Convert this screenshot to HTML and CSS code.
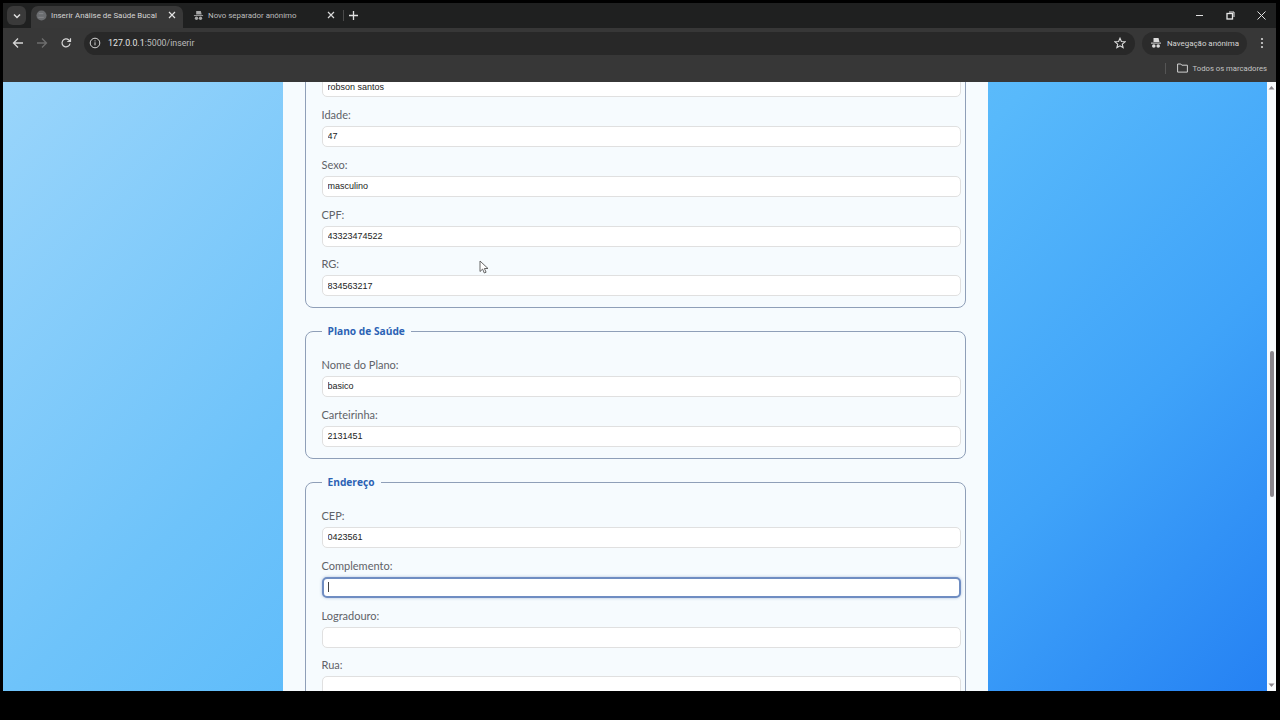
FILE: index.html
```html
<!DOCTYPE html>
<html>
    <head>
        <title>Inserir Análise de Saúde Bucal</title>

        <link rel="stylesheet" href="styles.css">

    </head>

    <body>
    <div class="browser">
        <div class="tabstrip">
            <span class="tab-search">
                <svg width="10" height="10" viewBox="0 0 10 10"><path d="M2 3.5 5 6.5 8 3.5" fill="none" stroke="#e0e0e0" stroke-width="1.5"/></svg>
            </span>
            <div class="tab tab-active">
                <svg class="favicon" width="11" height="11" viewBox="0 0 12 12"><circle cx="6" cy="6" r="5.5" fill="#6b6d70"/><path d="M3 4h5M2.5 8h6" stroke="#88898c" stroke-width="1"/></svg>
                <span class="tab-title">Inserir Análise de Saúde Bucal</span>
                <svg class="tab-x" width="8" height="8" viewBox="0 0 8 8"><path d="M1 1 7 7M7 1 1 7" stroke="#e4e4e4" stroke-width="1.2"/></svg>
            </div>
            <div class="tab tab-other">
                <svg class="favicon" width="11" height="11" viewBox="0 0 12 12"><path d="M3.5 1h5l1 4h-6z" fill="#a8a8a8"/><path d="M1 5.6h10v1H1z" fill="#a8a8a8"/><circle cx="3.8" cy="9" r="1.8" fill="#a8a8a8"/><circle cx="8.2" cy="9" r="1.8" fill="#a8a8a8"/></svg>
                <span class="tab-title">Novo separador anónimo</span>
                <svg class="tab-x" width="8" height="8" viewBox="0 0 8 8"><path d="M1 1 7 7M7 1 1 7" stroke="#d8d8d8" stroke-width="1.2"/></svg>
            </div>
            <span class="tab-sep"></span>
            <svg class="tab-new" width="9" height="9" viewBox="0 0 9 9"><path d="M4.5 0v9M0 4.5h9" stroke="#e0e0e0" stroke-width="1.3"/></svg>
            <div class="win-controls">
                <svg width="9" height="9" viewBox="0 0 9 9"><path d="M1 4.5h7" stroke="#e0e0e0" stroke-width="1"/></svg>
                <svg width="9" height="9" viewBox="0 0 9 9"><rect x="1" y="2.5" width="5.5" height="5.5" fill="none" stroke="#e8e8e8" stroke-width="1.3"/><path d="M3 1h5v5" fill="none" stroke="#e8e8e8" stroke-width="1"/></svg>
                <svg width="9" height="9" viewBox="0 0 9 9"><path d="M.5.5l8 8M8.5.5l-8 8" stroke="#e0e0e0" stroke-width="1"/></svg>
            </div>
        </div>

        <div class="toolbar">
            <svg class="nav-btn" width="12" height="12" viewBox="0 0 12 12"><path d="M11 6H2M6 1.5 1.5 6 6 10.5" fill="none" stroke="#d6d6d6" stroke-width="1.3"/></svg>
            <svg class="nav-btn" width="12" height="12" viewBox="0 0 12 12"><path d="M1 6h9M6 1.5 10.5 6 6 10.5" fill="none" stroke="#6e6e6e" stroke-width="1.3"/></svg>
            <svg class="nav-btn" width="12" height="12" viewBox="0 0 12 12"><path d="M10 6.5A4 4 0 1 1 8.8 3L10.2 4.3M10.5 1.3v3.2H7.3" fill="none" stroke="#d6d6d6" stroke-width="1.2"/></svg>
            <div class="omnibox">
                <svg width="12" height="12" viewBox="0 0 12 12"><circle cx="6" cy="6" r="4.8" fill="none" stroke="#d6d6d6" stroke-width="1"/><path d="M6 5.3v3M6 3.4v1" stroke="#d6d6d6" stroke-width="1"/></svg>
                <span class="url">127.0.0.1<span class="url-path">:5000/inserir</span></span>
                <svg class="star" width="12" height="12" viewBox="0 0 12 12"><path d="M6 1.2 7.4 4.5 11 4.8 8.3 7.1 9.1 10.6 6 8.8 2.9 10.6 3.7 7.1 1 4.8 4.6 4.5z" fill="none" stroke="#dcdcdc" stroke-width="1.1"/></svg>
            </div>
            <div class="incognito">
                <svg width="12" height="12" viewBox="0 0 12 12"><path d="M3.5 1h5l1 4h-6z" fill="#dcdcdc"/><path d="M1 5.6h10v1H1z" fill="#dcdcdc"/><circle cx="3.8" cy="9" r="1.8" fill="#dcdcdc"/><circle cx="8.2" cy="9" r="1.8" fill="#dcdcdc"/></svg>
                <span>Navegação anónima</span>
            </div>
            <svg class="kebab" width="4" height="12" viewBox="0 0 4 12"><circle cx="2" cy="2" r="1.1" fill="#d6d6d6"/><circle cx="2" cy="6" r="1.1" fill="#d6d6d6"/><circle cx="2" cy="10" r="1.1" fill="#d6d6d6"/></svg>
        </div>

        <div class="bookmarks">
            <span class="bm-sep"></span>
            <svg width="11" height="10" viewBox="0 0 11 10"><path d="M.6 1h3.2l1 1.2h5.6v6.9H.6z" fill="none" stroke="#d0d0d0" stroke-width="1"/></svg>
            <span>Todos os marcadores</span>
        </div>

        <div class="viewport">
            <div class="page">
                <div class="container">
                    <fieldset>
                        <div class="field"><input type="text" value="robson santos"></div>
                        <div class="field"><label>Idade:</label><input type="text" value="47"></div>
                        <div class="field"><label>Sexo:</label><input type="text" value="masculino"></div>
                        <div class="field"><label>CPF:</label><input type="text" value="43323474522"></div>
                        <div class="field"><label>RG:</label><input type="text" value="834563217"></div>
                    </fieldset>

                    <fieldset>
                        <legend>Plano de Saúde</legend>
                        <div class="field"><label>Nome do Plano:</label><input type="text" value="basico"></div>
                        <div class="field"><label>Carteirinha:</label><input type="text" value="2131451"></div>
                    </fieldset>

                    <fieldset>
                        <legend>Endereço</legend>
                        <div class="field"><label>CEP:</label><input type="text" value="0423561"></div>
                        <div class="field field-focus"><label>Complemento:</label><input type="text"><span class="caret"></span></div>
                        <div class="field"><label>Logradouro:</label><input type="text"></div>
                        <div class="field"><label>Rua:</label><input type="text"></div>
                    </fieldset>
                </div>
                <svg class="pointer" width="10" height="14" viewBox="0 0 10 14"><path d="M1 1v10.5l2.6-2.4 1.7 3.9 1.8-.8-1.7-3.7H9z" fill="#fff" stroke="#555" stroke-width=".9"/></svg>
            </div>
            <div class="scrollbar">
                <svg width="7" height="5" viewBox="0 0 7 5"><path d="M3.5 1 6.5 4.5H.5z" fill="#8a868c"/></svg>
                <div class="scroll-track"><div class="scroll-thumb"></div></div>
                <svg width="7" height="5" viewBox="0 0 7 5"><path d="M3.5 4 .5.5h6z" fill="#8a868c"/></svg>
            </div>
        </div>
    </div>
    </body>
</html>
```

FILE: styles.css
```css
html, body{
    height: 100%;
}

body{
    margin: 0;
    background-color: #000;
    overflow: hidden;
}

.browser{
    display: flex;
    flex-direction: column;
    box-sizing: border-box;
    height: 720px;
    padding: 3px 4px 29px 3px;
    font-family: Roboto, sans-serif;
    color: #d6d6d6;
}

/* barra das abas */
.tabstrip{
    display: flex;
    align-items: flex-end;
    height: 25px;
    flex: none;
    background-color: #1f2020;
    font-size: 7.9px;
}

.tab-search{
    display: flex;
    align-items: center;
    justify-content: center;
    width: 19px;
    height: 19px;
    margin: 0 5px 3px 4px;
    border-radius: 6px;
    background-color: #3a3a3a;
}

.tab{
    display: flex;
    align-items: center;
    height: 22px;
    padding-bottom: 4px;
    box-sizing: border-box;
}

.tab-active{
    width: 152px;
    padding-left: 5px;
    padding-right: 7px;
    border-radius: 7px 7px 0 0;
    background-color: #383838;
}

.tab-other{
    width: 154px;
    padding-left: 10px;
    padding-right: 2px;
    color: #bdbdbd;
}

.favicon{
    flex: none;
    margin-right: 4px;
}

.tab-title{
    flex: 1;
    white-space: nowrap;
}

.tab-x{
    flex: none;
}

.tab-sep{
    width: 1px;
    height: 11px;
    margin: 0 5px 7px 6px;
    background-color: #4a4a4a;
}

.tab-new{
    margin-bottom: 8px;
}

.win-controls{
    display: flex;
    gap: 22px;
    margin-left: auto;
    margin-right: 10px;
    margin-bottom: 8px;
}

/* barra de endereço */
.toolbar{
    display: flex;
    align-items: center;
    height: 30px;
    flex: none;
    padding: 0 12px 0 9px;
    background-color: #373737;
}

.nav-btn{
    flex: none;
    margin-right: 12px;
}

.omnibox{
    display: flex;
    align-items: center;
    flex: 1;
    height: 23px;
    padding: 0 9px 0 5px;
    border-radius: 12px;
    background-color: #282828;
}

.url{
    margin-left: 7px;
    font-size: 8.8px;
    color: #e4e4e4;
}

.url-path{
    color: #bcbcbc;
}

.star{
    margin-left: auto;
}

.incognito{
    display: flex;
    align-items: center;
    gap: 5px;
    height: 23px;
    margin-left: 7px;
    padding: 0 8px 0 8px;
    border-radius: 12px;
    background-color: #2b2b2b;
    font-size: 7.9px;
    white-space: nowrap;
}

.kebab{
    margin-left: 13px;
}

/* favoritos */
.bookmarks{
    display: flex;
    align-items: center;
    justify-content: flex-end;
    gap: 5px;
    box-sizing: border-box;
    height: 24px;
    flex: none;
    padding: 0 9px 4px 0;
    background-color: #373737;
    font-size: 7.7px;
    color: #c4c4c4;
}

.bm-sep{
    width: 1px;
    height: 11px;
    margin-right: 6px;
    background-color: #555;
}

/* pagina */
.viewport{
    display: flex;
    flex: 1;
    min-height: 0;
}

.page{
    position: relative;
    flex: 1;
    display: flex;
    justify-content: center;
    overflow: hidden;
    background: linear-gradient(135deg, #9ad5fb 0%, #6ec3fa 33%, #58b9fb 55%, #3fa3f9 78%, #2581f3 100%);
}

.container{
    box-sizing: border-box;
    width: 705px;
    height: 900px;
    margin-top: -27px;
    padding: 0 22px;
    background-color: #f6fbfe;
}

fieldset{
    margin: 0 0 16.5px 0;
    padding: 20px 4px 0 16px;
    border: 1px solid #8f9fb8;
    border-radius: 8px;
}

fieldset + fieldset{
    padding-bottom: 1px;
}

legend{
    padding: 0 6px;
    font-family: "Open Sans", sans-serif;
    font-size: 10.2px;
    line-height: 13px;
    font-weight: 700;
    color: #2c62b4;
}

.field{
    position: relative;
    display: flex;
    flex-direction: column;
    margin-bottom: 10.85px;
}

label{
    height: 14px;
    margin-bottom: 4px;
    font-family: Lato, sans-serif;
    font-size: 11px;
    line-height: 14px;
    color: #5f6268;
}

input{
    box-sizing: border-box;
    height: 21px;
    padding: 0 5px;
    border: 1px solid #e0e0e0;
    border-radius: 5px;
    background-color: #fff;
    font-family: "Liberation Sans", sans-serif;
    font-size: 9px;
    color: #222;
    outline: none;
}

.field-focus input{
    border: 2px solid #6f8dc2;
    box-shadow: 0 0 3px rgba(95, 127, 184, 0.5);
}

.caret{
    position: absolute;
    left: 6px;
    bottom: 6px;
    width: 1px;
    height: 10px;
    background-color: #444;
}

.pointer{
    position: absolute;
    left: 476px;
    top: 178px;
}

/* barra de rolagem */
.scrollbar{
    display: flex;
    flex-direction: column;
    align-items: center;
    width: 9px;
    padding: 3px 0;
    box-sizing: border-box;
    background-color: #f8fbfd;
}

.scroll-track{
    flex: 1;
    width: 4px;
    padding-top: 261px;
}

.scroll-thumb{
    height: 146px;
    border-radius: 2px;
    background-color: #8a868c;
}
```
